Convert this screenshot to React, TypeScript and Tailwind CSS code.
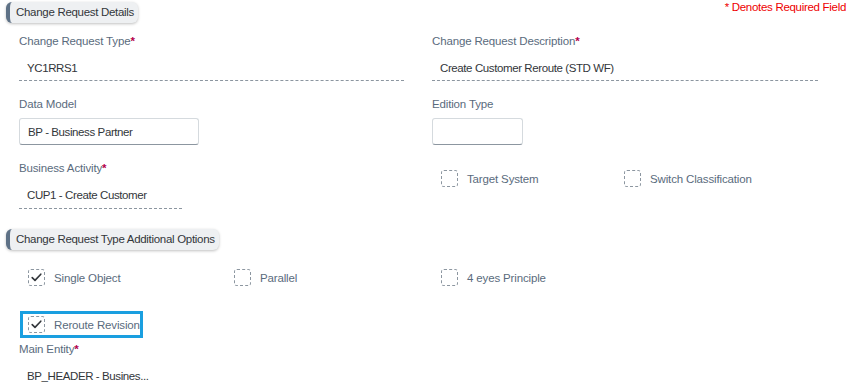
import React from "react";

const font = { fontFamily: '"Liberation Sans", Arial, sans-serif' };

function Check({ checked }: { checked?: boolean }) {
  return (
    <div className="w-[17px] h-[17px] border border-dashed border-[#8c96a0] rounded-[3px] flex items-center justify-center shrink-0 bg-white">
      {checked && (
        <svg width="11" height="9" viewBox="0 0 11 9" fill="none">
          <path d="M1.2 4.6 L4 7.4 L9.8 1.2" stroke="#32363a" strokeWidth="1.6" strokeLinecap="round" strokeLinejoin="round" />
        </svg>
      )}
    </div>
  );
}

function Pill({ children }: { children: React.ReactNode }) {
  return (
    <div className="h-[21px] ml-[6px] inline-flex items-center bg-[#eef0f2] rounded-[6px] shadow-[0_1px_3px_rgba(0,0,0,0.25)] border-l-[4px] border-[#5e7186] pl-[6px] pr-[4px] text-[11.5px] tracking-[-0.3px] text-[#32363a] whitespace-nowrap">
      {children}
    </div>
  );
}

function Label({ text, req }: { text: string; req?: boolean }) {
  return (
    <div className="h-[16px] leading-[16px] text-[11.5px] tracking-[-0.15px] text-[#5a6b7d] whitespace-nowrap">
      {text}
      {req && <span className="text-[#b5004a] font-bold">*</span>}
    </div>
  );
}

function CheckItem({ text, checked }: { text: string; checked?: boolean }) {
  return (
    <div className="flex items-center gap-[9px]">
      <Check checked={checked} />
      <span className="text-[11.5px] tracking-[-0.15px] text-[#5a6b7d] leading-[16px] whitespace-nowrap">{text}</span>
    </div>
  );
}

const valueCls = "pl-[8px] leading-[16px] text-[11.5px] tracking-[-0.4px] text-[#32363a] whitespace-nowrap";

export default function App() {
  return (
    <div className="w-[850px] h-[385px] bg-white overflow-hidden" style={font}>
      <div className="flex justify-between items-start pt-[2px]">
        <Pill>Change Request Details</Pill>
        <div className="text-[11.5px] tracking-[-0.3px] leading-[12px] text-[#ee0000] pr-[4px] -mt-[1px]">* Denotes Required Field</div>
      </div>

      <div className="grid grid-cols-[413px_386px] pl-[19px] mt-[10px]">
        <div>
          <Label text="Change Request Type" req />
          <div className={`w-[385px] pt-[11px] pb-[4px] border-b border-dashed border-[#8c96a0] ${valueCls}`}>YC1RRS1</div>
        </div>
        <div>
          <Label text="Change Request Description" req />
          <div className={`w-[386px] pt-[11px] pb-[4px] border-b border-dashed border-[#8c96a0] ${valueCls}`}>Create Customer Reroute (STD WF)</div>
        </div>
      </div>

      <div className="grid grid-cols-[413px_386px] pl-[19px] mt-[15px]">
        <div>
          <Label text="Data Model" />
          <div className={`mt-[6px] w-[180px] h-[27px] flex items-center border border-[#d5dade] border-b-[#8c96a0] border-b-dotted rounded-[3px] ${valueCls}`}>BP - Business Partner</div>
        </div>
        <div>
          <Label text="Edition Type" />
          <div className="mt-[6px] w-[91px] h-[27px] border border-[#d5dade] border-b-[#8c96a0] border-b-dotted rounded-[3px]"></div>
        </div>
      </div>

      <div className="grid grid-cols-[413px_386px] pl-[19px] mt-[15px]">
        <div>
          <Label text="Business Activity" req />
          <div className={`w-[163px] pt-[11px] pb-[5px] border-b border-dashed border-[#8c96a0] ${valueCls}`}>CUP1 - Create Customer</div>
        </div>
        <div className="flex items-start pt-[10px] pl-[9px]">
          <div className="w-[183px]"><CheckItem text="Target System" /></div>
          <CheckItem text="Switch Classification" />
        </div>
      </div>

      <div className="mt-[17px]">
        <Pill>Change Request Type Additional Options</Pill>
      </div>

      <div className="flex pl-[28px] mt-[19px]">
        <div className="w-[206px]"><CheckItem text="Single Object" checked /></div>
        <div className="w-[207px]"><CheckItem text="Parallel" /></div>
        <CheckItem text="4 eyes Principle" />
      </div>

      <div className="ml-[20px] mt-[25px] w-[123px] h-[27px] border-[3px] border-[#1a9fe0] flex items-center pl-[5px]">
        <CheckItem text="Reroute Revision" checked />
      </div>

      <div className="pl-[19px] mt-[3px]">
        <Label text="Main Entity" req />
        <div className={`pt-[11px] ${valueCls}`}>BP_HEADER - Busines...</div>
      </div>
    </div>
  );
}
